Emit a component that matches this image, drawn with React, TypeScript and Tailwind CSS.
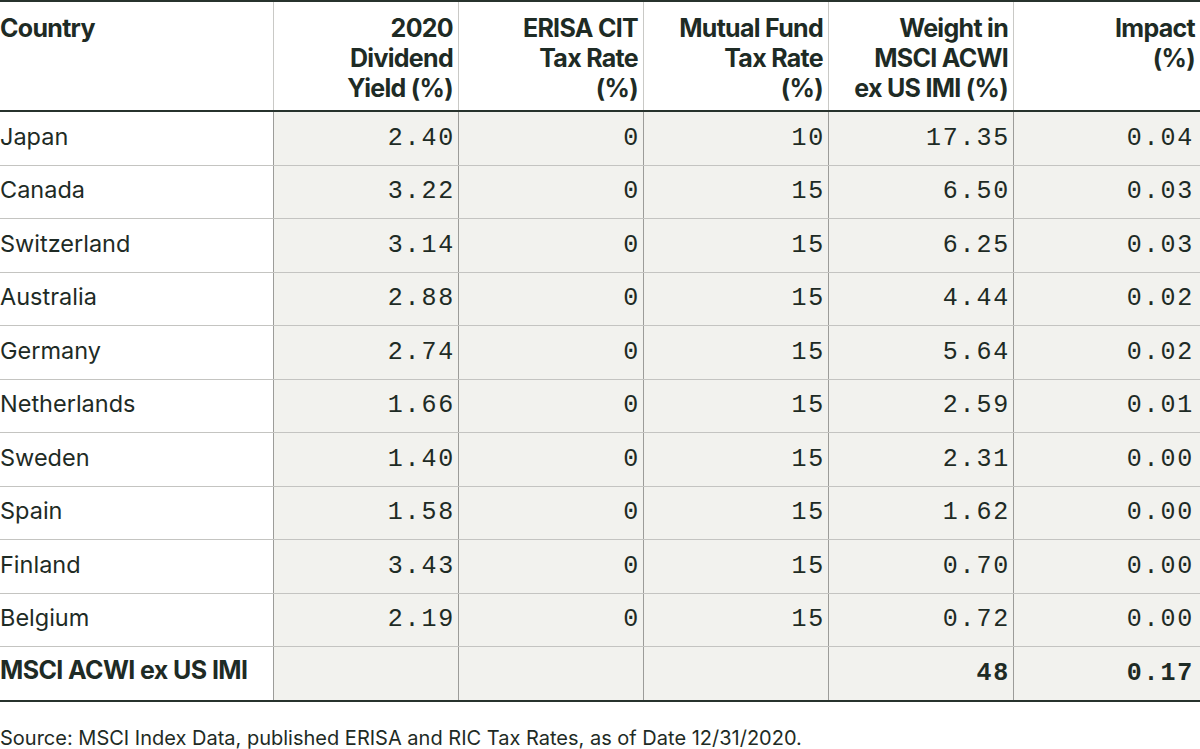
const rows = [
  ["Japan", "2.40", "0", "10", "17.35", "0.04"],
  ["Canada", "3.22", "0", "15", "6.50", "0.03"],
  ["Switzerland", "3.14", "0", "15", "6.25", "0.03"],
  ["Australia", "2.88", "0", "15", "4.44", "0.02"],
  ["Germany", "2.74", "0", "15", "5.64", "0.02"],
  ["Netherlands", "1.66", "0", "15", "2.59", "0.01"],
  ["Sweden", "1.40", "0", "15", "2.31", "0.00"],
  ["Spain", "1.58", "0", "15", "1.62", "0.00"],
  ["Finland", "3.43", "0", "15", "0.70", "0.00"],
  ["Belgium", "2.19", "0", "15", "0.72", "0.00"],
];

const headers = [
  ["2020", "Dividend", "Yield (%)"],
  ["ERISA CIT", "Tax Rate", "(%)"],
  ["Mutual Fund", "Tax Rate", "(%)"],
  ["Weight in", "MSCI ACWI", "ex US IMI (%)"],
  ["Impact", "(%)"],
];

const cols = "grid grid-cols-[273px_185px_185px_185px_185px_187px]";
const sans = "font-['Inter','Liberation_Sans',sans-serif]";
const mono = "font-['Liberation_Mono',monospace]";

// numeric cell; last column sits a bit further from the edge
const numCell = (i: number) =>
  `${mono} text-[25px] tracking-[1.8px] bg-[#f2f2ee] border-l border-[#9c9c99] flex items-center justify-end ${
    i === 4 ? "pr-[6px]" : "pr-[3px]"
  }`;

export default function App() {
  return (
    <div className="w-[1200px] h-[749px] bg-white text-[#1e2b25] overflow-hidden">
      <div className="border-t-2 border-b-2 border-[#27332d]">
        {/* header */}
        <div className={`${cols} h-[108px] ${sans} font-bold text-[25px] leading-[30px] tracking-[-0.7px]`}>
          <div className="pt-[11px]">Country</div>
          {headers.map((h, i) => (
            <div key={i} className="border-l border-[#c9c9c6] pt-[11px] pr-[5px] text-right">
              {h.map((l) => (
                <div key={l}>{l}</div>
              ))}
            </div>
          ))}
        </div>
        <div className="border-t-2 border-[#27332d]">
          {rows.map((r) => (
            <div key={r[0]} className={`${cols} h-[53.5px] border-b border-[#c4c4c1]`}>
              <div className={`${sans} text-[23.5px] flex items-center pb-[4px]`}>{r[0]}</div>
              {r.slice(1).map((v, i) => (
                <div key={i} className={numCell(i)}>
                  {v}
                </div>
              ))}
            </div>
          ))}
          <div className={`${cols} h-[52.5px]`}>
            <div className={`${sans} font-bold text-[25px] tracking-[-0.6px] flex items-center pb-[6px]`}>
              MSCI ACWI ex US IMI
            </div>
            {["", "", "", "48", "0.17"].map((v, i) => (
              <div key={i} className={`${numCell(i)} font-bold`}>
                {v}
              </div>
            ))}
          </div>
        </div>
      </div>
      <div className={`${sans} text-[20px] mt-[21px]`}>
        Source: MSCI Index Data, published ERISA and RIC Tax Rates, as of Date 12/31/2020.
      </div>
    </div>
  );
}
